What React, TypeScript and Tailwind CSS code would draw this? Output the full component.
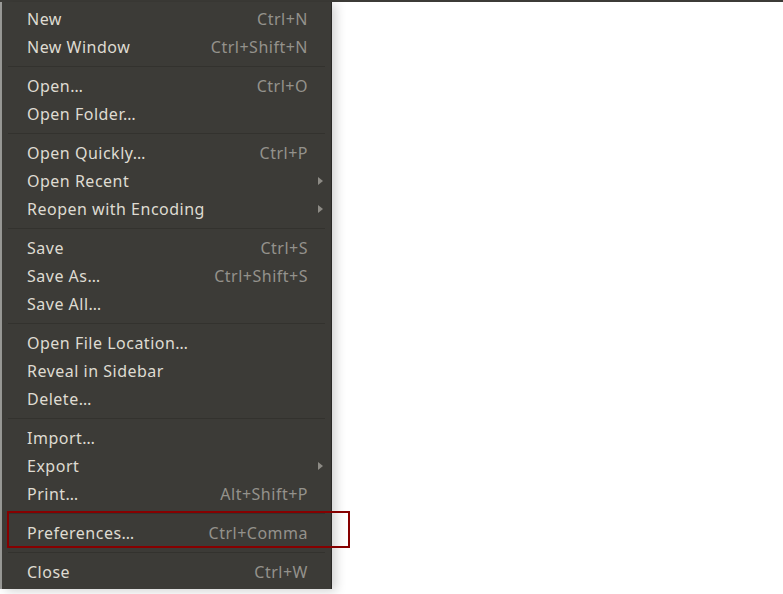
type Item = { label: string; accel?: string; sub?: boolean; mark?: boolean };

const groups: Item[][] = [
  [{ label: 'New', accel: 'Ctrl+N' }, { label: 'New Window', accel: 'Ctrl+Shift+N' }],
  [{ label: 'Open…', accel: 'Ctrl+O' }, { label: 'Open Folder…' }],
  [
    { label: 'Open Quickly…', accel: 'Ctrl+P' },
    { label: 'Open Recent', sub: true },
    { label: 'Reopen with Encoding', sub: true },
  ],
  [{ label: 'Save', accel: 'Ctrl+S' }, { label: 'Save As…', accel: 'Ctrl+Shift+S' }, { label: 'Save All…' }],
  [{ label: 'Open File Location…' }, { label: 'Reveal in Sidebar' }, { label: 'Delete…' }],
  [{ label: 'Import…' }, { label: 'Export', sub: true }, { label: 'Print…', accel: 'Alt+Shift+P' }],
  [{ label: 'Preferences…', accel: 'Ctrl+Comma', mark: true }],
  [{ label: 'Close', accel: 'Ctrl+W' }],
];

function Row({ item }: { item: Item }) {
  return (
    <div className="relative flex h-[28px] items-center justify-between pl-[25px] pr-[23px]">
      <span className="text-[#dfdbd2]">{item.label}</span>
      {item.accel && <span className="text-[#94928c]">{item.accel}</span>}
      {item.sub && (
        <svg className="absolute right-[8px] top-[10px]" width="5" height="8" viewBox="0 0 5 8">
          <path d="M0 0 L5 4 L0 8 Z" fill="#8d8b85" />
        </svg>
      )}
      {item.mark && (
        <div className="absolute left-[5px] top-[-8px] h-[37px] w-[343px] border-2 border-[#860000]" />
      )}
    </div>
  );
}

export default function App() {
  return (
    <div className="h-[594px] w-[783px] overflow-hidden bg-white" style={{ fontFamily: '"Noto Sans", sans-serif' }}>
      <div className="h-[2px] w-full bg-[#3c3b37]" />
      <div className="flex">
        <div className="h-[587px] w-[2px] bg-[#9c9c99]" />
        <div className="relative h-[587px] w-[330px] border-r border-[#2a2926] bg-[#3c3b37] pt-[3px] text-[16px] tracking-[0.5px] shadow-[4px_2px_10px_rgba(0,0,0,0.18)]">
          {groups.map((g, i) => (
            <div key={i}>
              {i > 0 && (
                <div className="flex h-[11px] items-center px-[6px]">
                  <div className="h-px w-full bg-[#33322e]" />
                </div>
              )}
              {g.map((item) => (
                <Row key={item.label} item={item} />
              ))}
            </div>
          ))}
        </div>
      </div>
    </div>
  );
}
